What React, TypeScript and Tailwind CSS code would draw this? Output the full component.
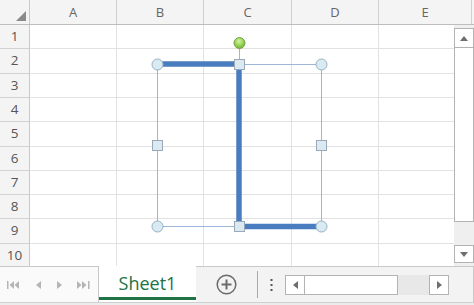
import React from "react";

const cols = [
  { l: "A", w: "w-[87px]" },
  { l: "B", w: "w-[87px]" },
  { l: "C", w: "w-[88px]" },
  { l: "D", w: "w-[87px]" },
  { l: "E", w: "w-[93px]" },
];
const rowH = [24, 25, 24, 24, 25, 24, 24, 24, 25, 24];

function Arrow({ dir }: { dir: "up" | "down" | "left" | "right" }) {
  const pts =
    dir === "up"
      ? "0,5 4,0 8,5"
      : dir === "down"
      ? "0,0 8,0 4,5"
      : dir === "left"
      ? "5,0 5,8 0,4"
      : "0,0 5,4 0,8";
  const w = dir === "up" || dir === "down" ? 8 : 5;
  const h = dir === "up" || dir === "down" ? 5 : 8;
  return (
    <svg width={w} height={h} viewBox={`0 0 ${w} ${h}`}>
      <polygon points={pts} fill="#6e6e6e" />
    </svg>
  );
}

export default function App() {
  return (
    <div className="w-[474px] h-[305px] bg-white overflow-hidden flex flex-col font-['Open_Sans','Noto_Sans',sans-serif] text-[#555]">
      <div className="relative h-[266px] flex flex-col">
        {/* header */}
        <div className="flex h-[25px] bg-[#f4f4f4] border-b border-[#bdbdbd]">
          <div className="w-[30px] border-r border-[#c9c9c9] relative">
            <svg className="absolute left-[16px] top-[11px]" width="10" height="10" viewBox="0 0 10 10">
              <polygon points="10,0 10,10 0,10" fill="#8a8a8a" />
            </svg>
          </div>
          {cols.map((c) => (
            <div
              key={c.l}
              className={`${c.w} border-r border-[#d0d0d0] flex items-center justify-center text-[13px] leading-none text-[#666]`}
            >
              {c.l}
            </div>
          ))}
        </div>
        {/* body */}
        <div className="flex flex-1 overflow-hidden">
          <div className="flex-1 flex flex-col overflow-hidden">
            {rowH.map((h, i) => (
              <div key={i} className={`flex shrink-0 ${h === 25 ? "h-[25px]" : "h-[24px]"}`}>
                <div className="w-[30px] shrink-0 bg-[#f4f4f4] border-r border-b border-[#d2d2d2] border-r-[#c9c9c9] flex items-center justify-center text-[13.5px] leading-none text-[#555]">
                  {i + 1}
                </div>
                {cols.map((c) => (
                  <div key={c.l} className={`${c.w} shrink-0 border-r border-b border-[#e2e2e2]`} />
                ))}
              </div>
            ))}
          </div>
          {/* vertical scrollbar */}
          <div className="w-[20px] bg-[#efefef] flex flex-col pt-[3px] pb-[3px]">
            <div className="h-[20px] border border-[#b3b3b3] bg-white flex items-center justify-center">
              <Arrow dir="up" />
            </div>
            <div className="h-[174px] border border-t-0 border-[#b3b3b3] bg-white" />
            <div className="flex-1" />
            <div className="h-[18px] border border-[#b3b3b3] bg-white flex items-center justify-center">
              <Arrow dir="down" />
            </div>
          </div>
        </div>
        {/* shape overlay */}
        <svg className="absolute left-0 top-0 pointer-events-none" width="474" height="266" viewBox="0 0 474 266">
          <defs>
            <radialGradient id="g" cx="0.45" cy="0.35" r="0.7">
              <stop offset="0" stopColor="#d6f3a6" />
              <stop offset="0.6" stopColor="#8fd04a" />
              <stop offset="1" stopColor="#6fae2e" />
            </radialGradient>
          </defs>
          <rect x="157.5" y="64.5" width="164" height="162" fill="none" stroke="#9db5d6" strokeWidth="1" />
          <line x1="239.5" y1="48" x2="239.5" y2="59" stroke="#9db5d6" strokeWidth="1" />
          <polyline
            points="157,64 239,64 239,226.5 321,226.5"
            fill="none"
            stroke="#4a7dbf"
            strokeWidth="5.5"
            strokeLinejoin="miter"
          />
          <circle cx="239.5" cy="43" r="5.5" fill="url(#g)" stroke="#7aa24e" strokeWidth="1" />
          {[
            [157.5, 64.5],
            [321.5, 64.5],
            [157.5, 226.5],
            [321.5, 226.5],
          ].map(([x, y], i) => (
            <circle key={i} cx={x} cy={y} r="5.5" fill="#d9ebf2" stroke="#9ab0bf" strokeWidth="1" />
          ))}
          {[
            [239.5, 64.5],
            [157.5, 145.5],
            [321.5, 145.5],
            [239.5, 226.5],
          ].map(([x, y], i) => (
            <rect key={i} x={x - 5} y={y - 5} width="10" height="10" fill="#dbeaf2" stroke="#9aa9b5" strokeWidth="1" />
          ))}
        </svg>
      </div>
      {/* tab bar */}
      <div className="flex h-[36px]">
        <div className="w-[99px] bg-[#fafafa] border-t border-r border-[#c8c8c8] flex items-center justify-between px-[7px]">
          <svg width="14" height="8" viewBox="0 0 14 8">
            <rect x="0" y="0" width="1.5" height="8" fill="#b5b5b5" />
            <polygon points="7,0 7,8 2.5,4" fill="#b5b5b5" />
            <polygon points="12,0 12,8 7.5,4" fill="#b5b5b5" />
          </svg>
          <svg width="5" height="8" viewBox="0 0 5 8">
            <polygon points="5,0 5,8 0,4" fill="#b5b5b5" />
          </svg>
          <svg width="5" height="8" viewBox="0 0 5 8">
            <polygon points="0,0 5,4 0,8" fill="#b5b5b5" />
          </svg>
          <svg width="14" height="8" viewBox="0 0 14 8">
            <polygon points="0,0 4.5,4 0,8" fill="#b5b5b5" />
            <polygon points="5,0 9.5,4 5,8" fill="#b5b5b5" />
            <rect x="11" y="0" width="1.5" height="8" fill="#b5b5b5" />
          </svg>
        </div>
        <div className="w-[97px] bg-white flex flex-col">
          <div className="flex-1 flex items-center justify-center text-[18px] text-[#217346] leading-none pt-[2px]">
            Sheet1
          </div>
          <div className="h-[3px] bg-[#217346] mb-[2px]" />
        </div>
        <div className="flex-1 bg-[#f3f3f3] border-t border-r border-[#c8c8c8] flex items-center">
          <div className="w-[61px] flex items-center justify-center">
            <svg width="21" height="21" viewBox="0 0 21 21">
              <circle cx="10.5" cy="10.5" r="9.3" fill="none" stroke="#6a6a6a" strokeWidth="1.5" />
              <line x1="10.5" y1="5.5" x2="10.5" y2="15.5" stroke="#6a6a6a" strokeWidth="2" />
              <line x1="5.5" y1="10.5" x2="15.5" y2="10.5" stroke="#6a6a6a" strokeWidth="2" />
            </svg>
          </div>
          <div className="w-px h-[27px] bg-[#a8a8a8]" />
          <div className="w-[27px] flex items-center justify-center">
            <svg width="3" height="12" viewBox="0 0 3 12">
              <rect x="0.5" y="0" width="2" height="2" fill="#555" />
              <rect x="0.5" y="5" width="2" height="2" fill="#555" />
              <rect x="0.5" y="10" width="2" height="2" fill="#555" />
            </svg>
          </div>
          <div className="flex items-center h-[20px]">
            <div className="w-[20px] h-[20px] border border-[#b3b3b3] bg-white flex items-center justify-center">
              <Arrow dir="left" />
            </div>
            <div className="w-[93px] h-[20px] border border-l-0 border-[#b3b3b3] bg-white" />
            <div className="w-[31px] h-[20px] bg-[#e8e8e8]" />
            <div className="w-[20px] h-[20px] border border-[#b3b3b3] bg-white flex items-center justify-center">
              <Arrow dir="right" />
            </div>
          </div>
        </div>
      </div>
      <div className="flex-1 bg-[#ececec] border-t border-[#d0d0d0]" />
    </div>
  );
}
